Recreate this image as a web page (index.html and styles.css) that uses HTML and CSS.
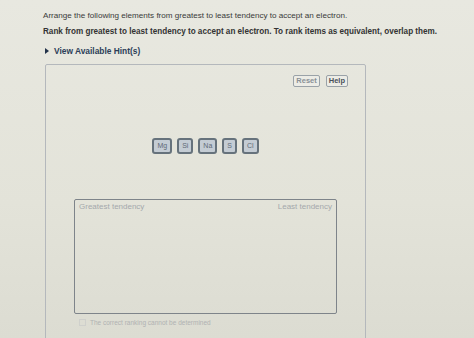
FILE: index.html
```html
<!DOCTYPE html>
<html>
<head>
<meta charset="utf-8">
<link rel="stylesheet" href="styles.css">
</head>
<body>
<div class="page">
  <p class="q1">Arrange the following elements from greatest to least tendency to accept an electron.</p>
  <p class="q2">Rank from greatest to least tendency to accept an electron. To rank items as equivalent, overlap them.</p>
  <div class="hint"><span class="tri"></span><span>View Available Hint(s)</span></div>
  <div class="panel">
    <div class="tools">
      <span class="btn reset">Reset</span>
      <span class="btn help">Help</span>
    </div>
    <div class="tiles">
      <span class="tile">Mg</span>
      <span class="tile">Si</span>
      <span class="tile">Na</span>
      <span class="tile">S</span>
      <span class="tile">Cl</span>
    </div>
    <div class="rank">
      <span>Greatest tendency</span>
      <span>Least tendency</span>
    </div>
    <div class="check"><span class="box"></span><span>The correct ranking cannot be determined</span></div>
  </div>
</div>
</body>
</html>
```
FILE: styles.css
```css
html, body {
  margin: 0;
  padding: 0;
  height: 100%;
  overflow: hidden;
}
body {
  background: linear-gradient(180deg, #e8e8e0 0%, #e3e3d9 60%, #dcdcd2 100%);
  font-family: "Liberation Sans", Arial, sans-serif;
  color: #3c3c3c;
}
.page {
  padding: 11px 0 0 43px;
}
.q1 {
  margin: 0;
  font-size: 8.1px;
  line-height: 10px;
  color: #3a3a3a;
}
.q2 {
  margin: 6px 0 0;
  font-size: 8.15px;
  line-height: 10px;
  font-weight: bold;
  color: #333;
}
.hint {
  margin: 9px 0 0 2px;
  display: flex;
  align-items: center;
  gap: 5px;
  font-size: 8.4px;
  line-height: 10px;
  font-weight: bold;
  color: #2c3e58;
}
.tri {
  width: 0;
  height: 0;
  border-top: 3px solid transparent;
  border-bottom: 3px solid transparent;
  border-left: 4px solid #22324a;
}
.panel {
  margin: 8px 0 0 2px;
  width: 319px;
  height: 300px;
  border: 1px solid #b4b8bc;
  border-radius: 2px;
  display: flex;
  flex-direction: column;
}
.tools {
  display: flex;
  justify-content: flex-end;
  gap: 6px;
  padding: 10px 17px 0 0;
}
.btn {
  border: 1px solid #9aa2a8;
  border-radius: 2px;
  font-size: 7.5px;
  line-height: 10px;
  padding: 0 2px;
  font-weight: bold;
  background: #ecece6;
}
.reset { color: #8a9096; }
.help { color: #4a5058; }
.tiles {
  margin-top: 51px;
  display: flex;
  justify-content: center;
  gap: 5px;
}
.tile {
  height: 12px;
  padding: 0 3px;
  border: 2px solid #66727c;
  border-radius: 3px;
  background: #c4ccd4;
  font-size: 7px;
  line-height: 12px;
  color: #5e6a76;
}
.rank {
  margin: 45px 28px 0 28px;
  border: 1px solid #7e848a;
  border-radius: 2px;
  display: flex;
  justify-content: space-between;
  align-items: flex-start;
  padding: 2px 4px 0 4px;
  font-size: 8px;
  line-height: 9px;
  color: #a4a8ac;
  box-sizing: border-box;
  height: 115px;
}
.check {
  margin: 5px 0 0 33px;
  display: flex;
  align-items: center;
  gap: 4px;
  font-size: 6.5px;
  color: #b0b2b2;
}
.box {
  width: 5px;
  height: 5px;
  border: 1px solid #cfd0cc;
}
```
